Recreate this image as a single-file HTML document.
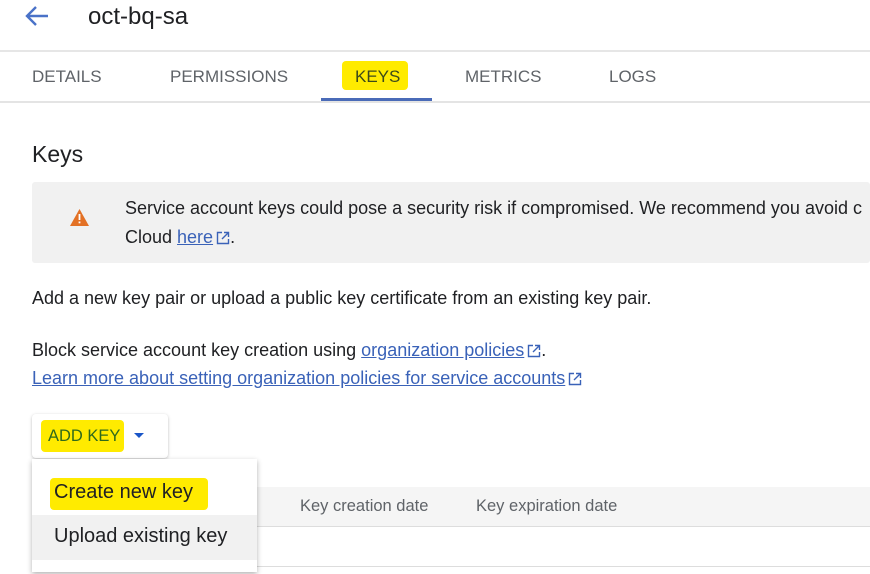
<!DOCTYPE html>
<html><head><meta charset="utf-8"><style>
*{margin:0;padding:0;box-sizing:border-box}
body{width:870px;height:574px;overflow:hidden;background:#fff;font-family:"Liberation Sans",Arial,sans-serif;color:#202124;position:relative}
.a{position:absolute;white-space:nowrap}
.tab{font-size:17px;color:#5f6368;top:67px}
.hl{background:#ffeb00}
a{color:#3a62b8;text-decoration:underline}
.t{font-size:18px;color:#202124}
.ext{display:inline-block;vertical-align:-2px;margin-left:3px}
</style></head><body>
<svg class="a" style="left:24px;top:4px" width="26" height="24" viewBox="0 0 26 24"><path d="M24 12H4M12 3L3 12l9 9" stroke="#4a72c8" stroke-width="2.4" fill="none"/></svg>
<div class="a" style="left:88px;top:3px;font-size:24px;color:#202124">oct-bq-sa</div>
<div class="a" style="left:0;top:50px;width:870px;height:2px;background:#e6e6e6"></div>
<div class="a tab" style="left:32px">DETAILS</div>
<div class="a tab" style="left:170px">PERMISSIONS</div>
<div class="a hl" style="left:342px;top:61px;width:66px;height:29px;border-radius:4px"></div>
<div class="a tab" style="left:355px;color:#3c4a1a">KEYS</div>
<div class="a tab" style="left:465px">METRICS</div>
<div class="a tab" style="left:609px">LOGS</div>
<div class="a" style="left:321px;top:98px;width:111px;height:3px;background:#4a6bb8"></div>
<div class="a" style="left:0;top:101px;width:870px;height:2px;background:#e4e4e4"></div>
<div class="a" style="left:32px;top:141px;font-size:23px">Keys</div>
<div class="a" style="left:32px;top:182px;width:838px;height:81px;background:#f1f1f1;border-radius:3px"></div>
<svg class="a" style="left:70px;top:209px" width="19" height="17" viewBox="0 0 19 17"><path d="M9.5 0L19 17H0z" fill="#e37125"/><rect x="8.6" y="5" width="1.8" height="6" fill="#fff"/><rect x="8.6" y="12.5" width="1.8" height="1.8" fill="#fff"/></svg>
<div class="a t" style="left:125px;top:198px">Service account keys could pose a security risk if compromised. We recommend you avoid c</div>
<div class="a t" style="left:125px;top:227px">Cloud <a>here</a><svg class="ext" width="14" height="14" viewBox="0 0 14 14"><path d="M6 1.5H1.5v11h11V8M8 1.5h4.5V6M12.5 1.5L6 8" stroke="#3a62b8" stroke-width="1.4" fill="none"/></svg>.</div>
<div class="a t" style="left:32px;top:288px">Add a new key pair or upload a public key certificate from an existing key pair.</div>
<div class="a t" style="left:32px;top:340px">Block service account key creation using <a>organization policies</a><svg class="ext" width="14" height="14" viewBox="0 0 14 14"><path d="M6 1.5H1.5v11h11V8M8 1.5h4.5V6M12.5 1.5L6 8" stroke="#3a62b8" stroke-width="1.4" fill="none"/></svg>.</div>
<div class="a t" style="left:32px;top:368px"><a>Learn more about setting organization policies for service accounts</a><svg class="ext" width="14" height="14" viewBox="0 0 14 14"><path d="M6 1.5H1.5v11h11V8M8 1.5h4.5V6M12.5 1.5L6 8" stroke="#3a62b8" stroke-width="1.4" fill="none"/></svg></div>
<div class="a" style="left:32px;top:414px;width:136px;height:44px;background:#fff;border-radius:4px;box-shadow:0 1px 3px rgba(0,0,0,.25)"></div>
<div class="a hl" style="left:41px;top:420px;width:83px;height:32px;border-radius:4px"></div>
<div class="a" style="left:48px;top:427px;font-size:16.5px;color:#2f6a1c">ADD KEY</div>
<svg class="a" style="left:134px;top:433px" width="10" height="6"><path d="M0 0h10L5 5z" fill="#1a56c8"/></svg>
<div class="a" style="left:255px;top:487px;width:615px;height:40px;background:#f5f5f5;border-bottom:1px solid #ddd"></div>
<div class="a" style="left:300px;top:497px;font-size:16.5px;color:#5f6368">Key creation date</div>
<div class="a" style="left:476px;top:497px;font-size:16.5px;color:#5f6368">Key expiration date</div>
<div class="a" style="left:255px;top:566px;width:615px;height:1px;background:#ddd"></div>
<div class="a" style="left:32px;top:459px;width:225px;height:113px;background:#fff;box-shadow:0 2px 5px rgba(0,0,0,.3)"></div>
<div class="a hl" style="left:50px;top:478px;width:158px;height:32px;border-radius:4px"></div>
<div class="a" style="left:54px;top:481px;font-size:20px;color:#202124">Create new key</div>
<div class="a" style="left:32px;top:515px;width:225px;height:45px;background:#f1f1f1"></div>
<div class="a" style="left:54px;top:525px;font-size:20px;color:#202124">Upload existing key</div>
</body></html>
